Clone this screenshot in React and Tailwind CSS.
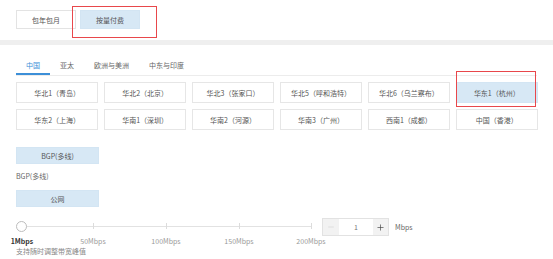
import { Minus, Plus } from 'lucide-react'

const regions = [
    '华北1（青岛）', '华北2（北京）', '华北3（张家口）', '华北5（呼和浩特）', '华北6（乌兰察布）', '华东1（杭州）',
    '华东2（上海）', '华南1（深圳）', '华南2（河源）', '华南3（广州）', '西南1（成都）', '中国（香港）',
]

const tabs = ['中国', '亚太', '欧洲与美洲', '中东与印度']

const ticks = [
    { label: '1Mbps', x: 22 },
    { label: '50Mbps', x: 93 },
    { label: '100Mbps', x: 166 },
    { label: '150Mbps', x: 239 },
    { label: '200Mbps', x: 311 },
]

export default function App() {
    return (
        <div className="relative w-[553px] h-[259px] overflow-hidden bg-white text-[#555] text-[7px] leading-[10px]" style={{ fontFamily: '"Noto Sans CJK SC", "Noto Sans", sans-serif' }}>
            {/* 计费方式 */}
            <div className="flex gap-[4px] pl-[16px] pt-[10px] h-[40px]">
                <div className="w-[60px] h-[19px] flex items-center justify-center border border-[#e3e3e3] bg-white">包年包月</div>
                <div className="w-[60px] h-[19px] flex items-center justify-center border border-[#d3e5f3] bg-[#d7e8f5]">按量付费</div>
            </div>
            <div className="h-[5px] bg-[#efefef]" />

            {/* 地域 tabs */}
            <div className="mx-[16px] mt-[15px] flex border-b border-[#ececec] h-[16px]">
                {tabs.map((t, i) => (
                    <div key={t} className={`px-[10px] ${i === 0 ? 'text-[#3c8fd8] border-b-[2px] border-[#3c8fd8]' : 'text-[#666]'}`}>{t}</div>
                ))}
            </div>

            <div className="ml-[16px] mt-[6px] w-[522px] grid grid-cols-6 gap-x-[5.6px] gap-y-[6px]">
                {regions.map((r, i) => (
                    <div key={r} className={`h-[21px] flex items-center justify-center border ${i === 5 ? 'bg-[#d7e8f5] border-[#d3e5f3]' : 'bg-white border-[#e6e6e6]'}`}>{r}</div>
                ))}
            </div>

            {/* 线路 */}
            <div className="ml-[16px] mt-[17px] w-[83px] h-[17px] flex items-center justify-center bg-[#d7e8f5] border border-[#d3e5f3]">BGP(多线)</div>
            <div className="ml-[16px] mt-[7px] text-[#666]">BGP(多线)</div>
            <div className="ml-[16px] mt-[9px] w-[83px] h-[17px] flex items-center justify-center bg-[#d7e8f5] border border-[#d3e5f3]">公网</div>

            {/* 带宽 */}
            <div className="flex items-start mt-[10px]">
                <div className="relative w-[320px] h-[29px]">
                    <div className="absolute left-[21px] top-[9px] w-[290px] h-px bg-[#e2e2e2]" />
                    {ticks.slice(1).map(t => (
                        <div key={t.label} className="absolute top-[6px] w-px h-[6px] bg-[#dcdcdc]" style={{ left: t.x }} />
                    ))}
                    <div className="absolute left-[16px] top-[4px] w-[11px] h-[11px] rounded-full border border-[#bdbdbd] bg-white" />
                    {ticks.map((t, i) => (
                        <div key={t.label} className={`absolute top-[19px] -translate-x-1/2 ${i === 0 ? 'text-[#333] font-bold' : 'text-[#999]'}`} style={{ left: t.x }}>{t.label}</div>
                    ))}
                </div>
                <div className="flex items-center mt-[1px] ml-[2px]">
                    <div className="flex h-[18px] border border-[#e2e2e2]">
                        <div className="w-[16px] bg-[#f2f2f2] flex items-center justify-center text-[#c8c8c8]"><Minus size={8} strokeWidth={1.5} /></div>
                        <div className="w-[34px] bg-white flex items-center justify-center text-[#777]">1</div>
                        <div className="w-[15px] bg-[#f2f2f2] flex items-center justify-center text-[#444]"><Plus size={9} strokeWidth={1.8} /></div>
                    </div>
                    <div className="ml-[6px] text-[#666]">Mbps</div>
                </div>
            </div>
            <div className="ml-[16px] text-[#888]">支持随时调整带宽峰值</div>

            {/* 标注框 */}
            <div className="absolute left-[72px] top-[6px] w-[85px] h-[32px] border-[1.5px] border-[#e8474b]" />
            <div className="absolute left-[456px] top-[71px] w-[80px] h-[36px] border-[1.5px] border-[#e8474b]" />
        </div>
    )
}
